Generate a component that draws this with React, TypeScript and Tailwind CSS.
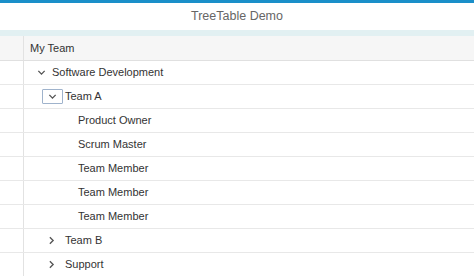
const ROWS: { label: string; level: number; kind: "open" | "closed" | "leaf"; focus?: boolean }[] = [
  { label: "Software Development", level: 0, kind: "open" },
  { label: "Team A", level: 1, kind: "open", focus: true },
  { label: "Product Owner", level: 2, kind: "leaf" },
  { label: "Scrum Master", level: 2, kind: "leaf" },
  { label: "Team Member", level: 2, kind: "leaf" },
  { label: "Team Member", level: 2, kind: "leaf" },
  { label: "Team Member", level: 2, kind: "leaf" },
  { label: "Team B", level: 1, kind: "closed" },
  { label: "Support", level: 1, kind: "closed" },
];

const INDENT = ["pl-[10px]", "pl-[18px]", "pl-[54px]"];

function Chevron({ open }: { open: boolean }) {
  return (
    <svg width="9" height="9" viewBox="0 0 10 10" fill="none" className="text-[#555]">
      {open ? (
        <path d="M1.5 3.2L5 6.8l3.5-3.6" stroke="currentColor" strokeWidth="1.5" />
      ) : (
        <path d="M3.2 1.5L6.8 5 3.2 8.5" stroke="currentColor" strokeWidth="1.5" />
      )}
    </svg>
  );
}

export default function App() {
  return (
    <div className="w-[474px] h-[276px] overflow-hidden bg-white font-['Liberation_Sans',Arial,sans-serif] text-[11px] text-[#333]">
      <div className="h-[3px] bg-[#1a8fc9]" />
      <div className="h-[27px] flex items-center justify-center text-[12.5px] text-[#666]">TreeTable Demo</div>
      <div className="h-[6px] bg-[#e2f0f2]" />
      {/* Header */}
      <div className="flex h-[25px] bg-[#f6f6f6] border-b border-[#e0e0e0]">
        <div className="w-[24px] border-r border-[#e2e2e2]" />
        <div className="flex items-center pl-[6px]">My Team</div>
      </div>
      {/* Rows */}
      {ROWS.map((r, i) => (
        <div key={i} className="flex h-[24px] border-b border-[#e8e8e8]">
          <div className="w-[24px] shrink-0 border-r border-[#e2e2e2]" />
          <div className={`flex items-center ${INDENT[r.level]}`}>
            {r.kind !== "leaf" && (
              r.focus ? (
                <span className="w-[21px] h-[15px] mr-[2px] flex items-center justify-center border border-[#9fb3cc] rounded-[1px]">
                  <Chevron open />
                </span>
              ) : (
                <span className={`w-[14px] flex items-center justify-center ${r.level === 0 ? "mr-[4px]" : "ml-[2px] mr-[7px]"}`}>
                  <Chevron open={r.kind === "open"} />
                </span>
              )
            )}
            <span>{r.label}</span>
          </div>
        </div>
      ))}
    </div>
  );
}
